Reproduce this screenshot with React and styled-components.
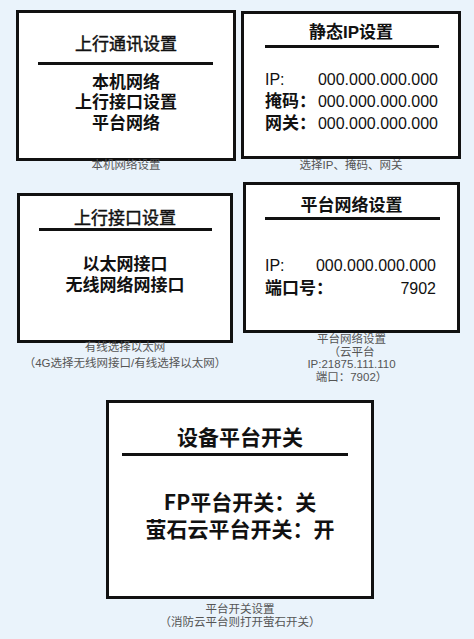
import React from 'react';
import styled, { createGlobalStyle } from 'styled-components';

const GlobalStyle = createGlobalStyle`
  html, body {
    margin: 0;
    padding: 0;
    background: #eaf3fb;
  }
  body {
    font-family: "Liberation Sans", "Noto Sans CJK SC", sans-serif;
    color: #111;
  }
`;

const Page = styled.div`
  width: 474px;
  height: 639px;
  padding-top: 10px;
  box-sizing: border-box;
  display: flex;
  flex-direction: column;
`;

const Row = styled.div`
  display: flex;
  align-items: flex-start;
  height: ${props => props.h}px;
  padding-left: ${props => props.left}px;
`;

const Card = styled.div`
  display: flex;
  flex-direction: column;
  width: ${props => props.w}px;
  margin-top: ${props => props.top || 0}px;
  margin-left: ${props => props.left || 0}px;
`;

const Panel = styled.div`
  box-sizing: border-box;
  width: 100%;
  height: ${props => props.h}px;
  border: 3px solid #111;
  background: #fff;
  display: flex;
  flex-direction: column;
  padding-top: ${props => props.pad}px;
`;

// medium titles get a thin stroke, heavy ones use the bold face
const Title = styled.div`
  font-family: "Liberation Sans", "Noto Sans CJK SC", sans-serif;
  font-size: ${props => props.size || 17}px;
  line-height: 20px;
  font-weight: ${props => props.bold ? 700 : 400};
  -webkit-text-stroke: ${props => props.bold ? 0 : 0.45}px #111;
  text-align: center;
  color: #111;
`;

const Rule = styled.div`
  height: 3px;
  background: #111;
  margin: ${props => props.gap}px ${props => props.right}px 0 ${props => props.left}px;
`;

const List = styled.div`
  display: flex;
  flex-direction: column;
  align-items: center;
  margin-top: ${props => props.gap}px;
  font-family: "Noto Sans CJK SC", sans-serif;
  font-size: ${props => props.size || 17}px;
  line-height: ${props => props.lh}px;
  font-weight: 700;
  color: #111;
`;

const Fields = styled.div`
  display: flex;
  flex-direction: column;
  margin: ${props => props.gap}px ${props => props.right}px 0 ${props => props.left}px;
  line-height: ${props => props.lh}px;
`;

const Field = styled.div`
  display: flex;
  justify-content: space-between;
  align-items: baseline;
`;

const Label = styled.span`
  font-family: ${props => props.latin ? '"Liberation Sans"' : '"Noto Sans CJK SC"'}, sans-serif;
  font-size: ${props => props.latin ? 16 : 17}px;
  font-weight: ${props => props.latin ? 400 : 700};
`;

const Value = styled.span`
  font-family: "Liberation Sans", sans-serif;
  font-size: 16px;
  color: #111;
`;

const Caption = styled.div`
  margin-top: ${props => props.gap || 0}px;
  font-family: "Liberation Sans", "Noto Sans CJK SC", sans-serif;
  font-size: 11.5px;
  line-height: ${props => props.lh || 13}px;
  color: #555;
  text-align: center;
  white-space: nowrap;
`;

const IpRow = ({ label, value, latin }) => (
  <Field>
    <Label latin={latin}>{label}</Label>
    <Value>{value}</Value>
  </Field>
);

export default function App() {
  return (
    <>
      <GlobalStyle />
      <Page>
        <Row h={172} left={16}>
          <Card w={220}>
            <Panel h={151} pad={22}>
              <Title>上行通讯设置</Title>
              <Rule gap={6.5} left={19} right={20} />
              <List gap={6.25} lh={20.5}>
                <span>本机网络</span>
                <span>上行接口设置</span>
                <span>平台网络</span>
              </List>
            </Panel>
            <Caption gap={-2}>本机网络设置</Caption>
          </Card>
          <Card w={220} top={1} left={5}>
            <Panel h={148} pad={9}>
              <Title bold>静态IP设置</Title>
              <Rule gap={1.5} left={21} right={19} />
              <Fields gap={22.5} lh={20} left={21} right={20}>
                <IpRow latin label="IP:" value="000.000.000.000" />
                <IpRow label="掩码：" value="000.000.000.000" />
                <IpRow label="网关：" value="000.000.000.000" />
              </Fields>
            </Panel>
            <Caption gap={0}>选择IP、掩码、网关</Caption>
          </Card>
        </Row>

        <Row h={218} left={17}>
          <Card w={216} top={11}>
            <Panel h={150} pad={13}>
              <Title>上行接口设置</Title>
              <Rule gap={-1} left={19} right={18} />
              <List gap={21} lh={21}>
                <span>以太网接口</span>
                <span>无线网络网接口</span>
              </List>
            </Panel>
            <Caption gap={-4} lh={16}>
              有线选择以太网
              <br />
              （4G选择无线网接口/有线选择以太网）
            </Caption>
          </Card>
          <Card w={217} left={10}>
            <Panel h={151} pad={11}>
              <Title bold>平台网络设置</Title>
              <Rule gap={0.5} left={19} right={17} />
              <Fields gap={35} lh={21} left={19} right={21}>
                <IpRow latin label="IP:" value="000.000.000.000" />
                <IpRow label="端口号：" value="7902" />
              </Fields>
            </Panel>
            <Caption lh={12.7}>
              平台网络设置
              <br />
              （云平台
              <br />
              IP:21875.111.110
              <br />
              端口：7902）
            </Caption>
          </Card>
        </Row>

        <Row h={229} left={106}>
          <Card w={268}>
            <Panel h={199} pad={25}>
              <Title bold size={21}>设备平台开关</Title>
              <Rule gap={4.5} left={13} right={23} />
              <List gap={32} lh={27} size={21}>
                <span>FP平台开关：关</span>
                <span>萤石云平台开关：开</span>
              </List>
            </Panel>
            <Caption gap={4}>
              平台开关设置
              <br />
              （消防云平台则打开萤石开关）
            </Caption>
          </Card>
        </Row>
      </Page>
    </>
  );
}
